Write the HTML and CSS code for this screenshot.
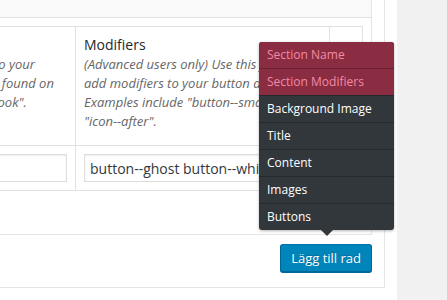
FILE: index.html
```html
<!DOCTYPE html>
<html lang="sv">
<head>
  <meta charset="UTF-8" />
  <meta name="viewport" content="width=device-width, initial-scale=1" />
  <title>Sektioner</title>
  <link rel="stylesheet" href="styles.css">
</head>
<body>

  <div class="main">
    <div class="postbox">

      <!-- repeater rows -->
      <div class="rows">
        <div class="rows-head"></div>
        <div class="rows-body">
          <table class="fields">
            <colgroup>
              <col class="col-classes">
              <col class="col-modifiers">
              <col class="col-remove">
            </colgroup>
            <thead>
              <tr>
                <th>
                  <span class="label">Classes</span>
                  <p class="description">List of the classes to add to your<br>button. All classes may be found on<br>the design system "Storybook".</p>
                </th>
                <th>
                  <span class="label">Modifiers</span>
                  <p class="description">(Advanced users only) Use this field to<br>add modifiers to your button design.<br>Examples include "button--small" or<br>"icon--after".</p>
                </th>
                <th></th>
              </tr>
            </thead>
            <tbody>
              <tr>
                <td><input type="text" class="field-input" value=""></td>
                <td><input type="text" class="field-input" value="button--ghost button--white"></td>
                <td></td>
              </tr>
            </tbody>
          </table>
        </div>
      </div>

      <div class="actions">
        <button class="button-primary">Lägg till rad</button>
      </div>
    </div>
  </div>

  <!-- layout picker -->
  <ul class="layout-menu">
    <li class="is-used">Section Name</li>
    <li class="is-used">Section Modifiers</li>
    <li>Background Image</li>
    <li>Title</li>
    <li>Content</li>
    <li>Images</li>
    <li>Buttons</li>
  </ul>

</body>
</html>
```

FILE: styles.css
```css
* {
  box-sizing: border-box;
  margin: 0;
  padding: 0;
}

body {
  font-family: 'Open Sans', sans-serif;
  background: #f1f1f1;
  color: #444;
  overflow: hidden;
}

.main {
  width: 577px;
  margin-left: -180px;
  min-height: 300px;
  background: #fff;
}

.postbox {
  margin-right: 12px;
  border: 1px solid #e5e5e5;
  border-top: 0;
  padding: 0 12px 15px;
}

.rows {
  border: 1px solid #e5e5e5;
  border-top: 0;
}

.rows-head {
  height: 18px;
  background: #f9f9f9;
  border-bottom: 1px solid #e1e1e1;
}

.rows-body {
  padding: 8px 8px 43px;
}

.fields {
  width: 100%;
  table-layout: fixed;
  border-collapse: collapse;
  border: 1px solid #e1e1e1;
}

.col-modifiers {
  width: 254px;
}

.col-remove {
  width: 33px;
}

.fields th,
.fields td {
  border: 1px solid #e1e1e1;
  text-align: left;
  vertical-align: top;
}

.fields th {
  padding: 7px 8px 14px;
  font-weight: 400;
}

.fields td {
  padding: 8px;
}

.label {
  display: block;
  font-size: 14px;
  line-height: 21px;
  color: #23282d;
}

.description {
  font-size: 13px;
  line-height: 19px;
  font-style: italic;
  color: #666;
  white-space: nowrap;
}

.field-input {
  display: block;
  width: 100%;
  height: 28px;
  padding: 0 5px;
  border: 1px solid #ddd;
  box-shadow: inset 0 1px 2px rgba(0, 0, 0, 0.07);
  font-family: 'Open Sans', sans-serif;
  font-size: 14px;
  color: #32373c;
  background: #fff;
}

.actions {
  display: flex;
  justify-content: flex-end;
  padding-top: 9px;
}

.button-primary {
  height: 28px;
  padding: 0 10px 1px;
  background: #0085ba;
  border: 1px solid #0073aa;
  border-color: #0073aa #006799 #006799;
  border-radius: 3px;
  box-shadow: 0 1px 0 #006799;
  color: #fff;
  font-family: 'Open Sans', sans-serif;
  font-size: 13px;
  line-height: 26px;
  text-shadow: 0 -1px 1px #006799;
  cursor: pointer;
}

.layout-menu {
  position: absolute;
  left: 259px;
  top: 42px;
  width: 135px;
  list-style: none;
  background: #32373c;
  border-radius: 3px;
  box-shadow: 0 1px 3px rgba(0, 0, 0, 0.3);
  font-size: 12px;
  line-height: 26px;
  color: #fff;
}

.layout-menu li {
  padding: 0 8px;
  border-top: 1px solid rgba(0, 0, 0, 0.25);
  white-space: nowrap;
}

.layout-menu li:first-child {
  border-top: 0;
  border-radius: 3px 3px 0 0;
}

.layout-menu li:last-child {
  border-radius: 0 0 3px 3px;
}

.layout-menu .is-used {
  background: #8a2c42;
  color: #f38aa2;
}

.layout-menu::after {
  content: "";
  position: absolute;
  left: 50%;
  top: 100%;
  margin-left: -6px;
  border: 6px solid transparent;
  border-bottom: 0;
  border-top-color: #32373c;
}
```
